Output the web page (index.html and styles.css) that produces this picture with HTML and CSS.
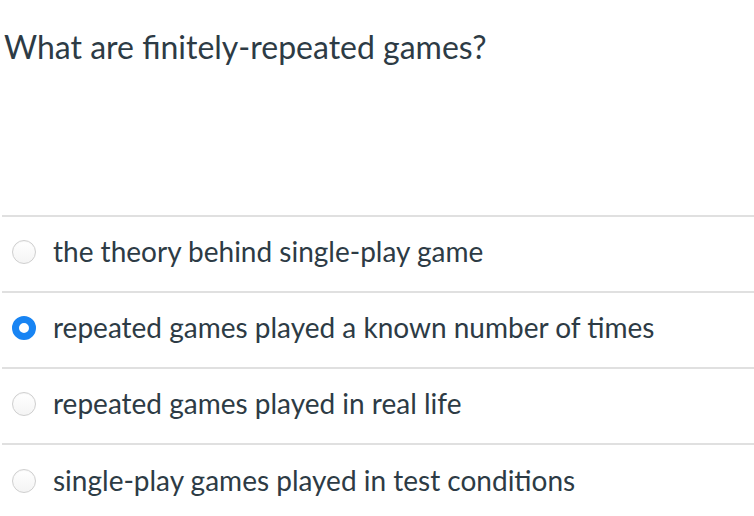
FILE: index.html
```html
<!DOCTYPE html>
<html lang="en">
<head>
<meta charset="utf-8">
<title>Quiz question</title>
<link rel="stylesheet" href="styles.css">
</head>
<body>
<div class="question">
  <h1 class="question-text">What are finitely-repeated games?</h1>
  <ul class="answers">
    <li class="answer">
      <span class="radio"></span>
      <span class="answer-label">the theory behind single-play game</span>
    </li>
    <li class="answer">
      <span class="radio radio-checked"></span>
      <span class="answer-label">repeated games played a known number of times</span>
    </li>
    <li class="answer">
      <span class="radio"></span>
      <span class="answer-label">repeated games played in real life</span>
    </li>
    <li class="answer">
      <span class="radio"></span>
      <span class="answer-label">single-play games played in test conditions</span>
    </li>
  </ul>
</div>
</body>
</html>
```

FILE: styles.css
```css
html, body {
  margin: 0;
  padding: 0;
  background: #ffffff;
}

body {
  font-family: "Lato", "Noto Sans", sans-serif;
  color: #2d3b45;
}

.question {
  padding-left: 2px;
}

.question-text {
  margin: 0;
  padding: 24px 0 0 2px;
  height: 215px;
  box-sizing: border-box;
  font-size: 32px;
  font-weight: 400;
  line-height: 46px;
}

.answers {
  list-style: none;
  margin: 0;
  padding: 0;
  border-top: 2px solid #e0e0e0;
}

.answer {
  display: flex;
  align-items: center;
  height: 74px;
  box-sizing: border-box;
  height: 76px;
  padding: 0 0 4px 10px;
  border-bottom: 2px solid #e0e0e0;
  gap: 17px;
}

.answer:last-child {
  border-bottom: none;
}

.radio {
  flex: none;
  width: 24px;
  height: 24px;
  box-sizing: border-box;
  border-radius: 50%;
  border: 1px solid #cfcfcf;
  background: linear-gradient(#ffffff, #f4f4f4);
  box-shadow: inset 0 1px 1px rgba(0, 0, 0, 0.04);
}

.radio-checked {
  border: 7px solid #1884f3;
  background: #ffffff;
  box-shadow: none;
}

.answer-label {
  font-size: 28px;
  line-height: 34px;
  margin-top: -2px;
}
```
